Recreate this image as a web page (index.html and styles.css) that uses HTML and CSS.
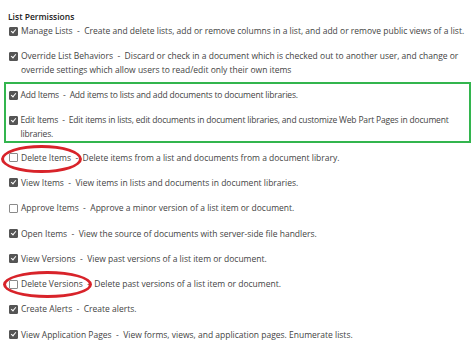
FILE: index.html
```html
<!DOCTYPE html>
<html>
<head>
<meta charset="utf-8">
<link rel="stylesheet" href="styles.css">
</head>
<body>
<div class="panel">
  <div class="heading">List Permissions</div>
  <div class="row"><span class="cb on"></span><span class="txt">Manage Lists &nbsp;- &nbsp;Create and delete lists, add or remove columns in a list, and add or remove public views of a list.</span></div>
  <div class="row"><span class="cb on"></span><span class="txt">Override List Behaviors &nbsp;- &nbsp;Discard or check in a document which is checked out to another user, and change or override settings which allow users to read/edit only their own items</span></div>
  <div class="highlight">
    <div class="row"><span class="cb on"></span><span class="txt">Add Items &nbsp;- &nbsp;Add items to lists and add documents to document libraries.</span></div>
    <div class="row"><span class="cb on"></span><span class="txt">Edit Items &nbsp;- &nbsp;Edit items in lists, edit documents in document libraries, and customize Web Part Pages in document libraries.</span></div>
  </div>
  <div class="row"><span class="ring ring-a"></span><span class="cb"></span><span class="txt">Delete Items &nbsp;- &nbsp;Delete items from a list and documents from a document library.</span></div>
  <div class="row"><span class="cb on"></span><span class="txt">View Items &nbsp;- &nbsp;View items in lists and documents in document libraries.</span></div>
  <div class="row"><span class="cb"></span><span class="txt">Approve Items &nbsp;- &nbsp;Approve a minor version of a list item or document.</span></div>
  <div class="row"><span class="cb on"></span><span class="txt">Open Items &nbsp;- &nbsp;View the source of documents with server-side file handlers.</span></div>
  <div class="row"><span class="cb on"></span><span class="txt">View Versions &nbsp;- &nbsp;View past versions of a list item or document.</span></div>
  <div class="row"><span class="ring ring-b"></span><span class="cb"></span><span class="txt">Delete Versions &nbsp;- &nbsp;Delete past versions of a list item or document.</span></div>
  <div class="row"><span class="cb on"></span><span class="txt">Create Alerts &nbsp;- &nbsp;Create alerts.</span></div>
  <div class="row"><span class="cb on"></span><span class="txt">View Application Pages &nbsp;- &nbsp;View forms, views, and application pages. Enumerate lists.</span></div>
</div>
</body>
</html>
```

FILE: styles.css
```css
html, body {
  margin: 0;
  padding: 0;
  background: #ffffff;
}
body {
  font-family: "Open Sans", "Noto Sans", sans-serif;
  font-size: 8.5px;
  line-height: 14px;
  color: #444444;
}
.panel {
  padding: 10px 3px 0 4px;
  display: flex;
  flex-direction: column;
  gap: 11.3px;
}
.heading {
  font-weight: 600;
  color: #222222;
  padding-left: 4px;
  margin-bottom: -11.3px;
}
.highlight {
  border: 2.5px solid #33b54e;
  margin: -6.5px 0 -4px 0;
  padding: 4px 0 0 0;
  display: flex;
  flex-direction: column;
  gap: 11.3px;
}
.highlight .row {
  padding-left: 2.5px;
  padding-right: 0;
}
.highlight .txt {
  letter-spacing: -0.18px;
}
.row {
  position: relative;
  display: flex;
  align-items: flex-start;
  padding-left: 5px;
  padding-right: 4px;
}
.cb {
  flex: none;
  width: 9px;
  height: 9px;
  margin: 2.5px 3px 0 0;
  box-sizing: border-box;
  border: 1px solid #8a8a8a;
  border-radius: 1px;
  background: #fff;
  position: relative;
}
.cb.on {
  background: #555555;
  border-color: #555555;
}
.cb.on::after {
  content: "";
  position: absolute;
  left: 2px;
  top: 0px;
  width: 2px;
  height: 4px;
  border: solid #ffffff;
  border-width: 0 1.5px 1.5px 0;
  transform: rotate(40deg);
}
.txt {
  flex: 1;
}
.ring {
  position: absolute;
  border: 3px solid #d8232a;
  border-radius: 50%;
  box-sizing: border-box;
  pointer-events: none;
}
.ring-a {
  left: -3px;
  top: -6px;
  width: 81px;
  height: 28px;
}
.ring-b {
  left: -1px;
  top: -6px;
  width: 89px;
  height: 27px;
}
```
